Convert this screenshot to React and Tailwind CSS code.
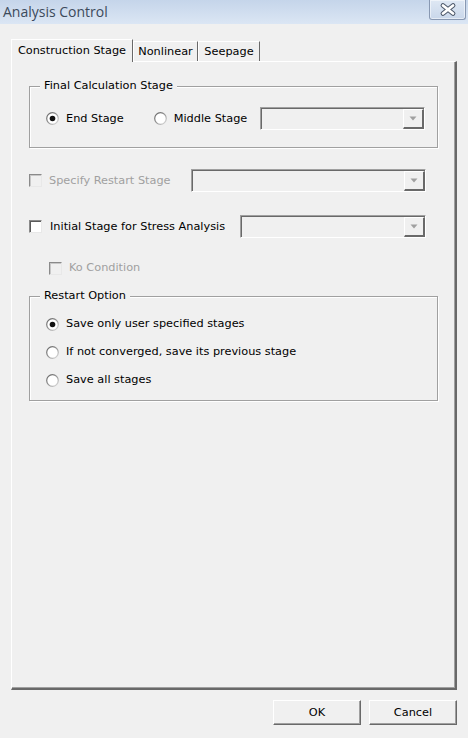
import React from "react";

const body = "font-['DejaVu_Sans',sans-serif] text-[11.3px] leading-[14px] text-black";

function Radio({ checked }) {
  return (
    <svg width="13" height="13" viewBox="0 0 13 13" className="shrink-0">
      <defs>
        <linearGradient id="rg" x1="0" y1="0" x2="1" y2="1">
          <stop offset="0" stopColor="#5f5f5f" />
          <stop offset="0.55" stopColor="#9a9a9a" />
          <stop offset="1" stopColor="#e2e2e2" />
        </linearGradient>
      </defs>
      <circle cx="6.5" cy="6.5" r="5.8" fill="#ffffff" stroke="url(#rg)" strokeWidth="1.2" />
      {checked && <circle cx="6.5" cy="6.5" r="2.8" fill="#111111" />}
    </svg>
  );
}

function Check({ disabled }) {
  return (
    <span
      className={
        "block w-[13px] h-[13px] shrink-0 border border-t-[#8a8a8a] border-l-[#8a8a8a] border-r-[#e8e8e8] border-b-[#e8e8e8] " +
        (disabled ? "bg-[#f0f0f0] shadow-[inset_1px_1px_0_#c8c8c8]" : "bg-white shadow-[inset_1px_1px_0_#5a5a5a]")
      }
    />
  );
}

function Combo({ w }) {
  return (
    <div
      className="flex justify-end h-[23px] border border-t-[#a0a0a0] border-l-[#a0a0a0] border-r-white border-b-white shadow-[inset_1px_1px_0_#696969] bg-[#f0f0f0] pt-[1px] pl-[1px] ml-auto"
      style={{ width: w }}
    >
      <div className="w-[21px] h-[20px] flex items-center justify-center bg-[#f0f0f0] border-t border-l border-t-white border-l-white border-r-2 border-b-2 border-r-[#696969] border-b-[#696969]">
        <svg width="8" height="5" viewBox="0 0 8 5">
          <path d="M0.5 0.5 L7.5 0.5 L4 4.5 Z" fill="#a0a0a0" />
        </svg>
      </div>
    </div>
  );
}

function Group({ title, className, children }) {
  return (
    <div
      className={
        "relative border border-[#a0a0a0] shadow-[1px_1px_0_#ffffff,inset_1px_1px_0_#ffffff] " + className
      }
    >
      <span className="absolute left-[10px] -top-[8px] px-[4px] bg-[#f0f0f0]">{title}</span>
      {children}
    </div>
  );
}

function Btn({ children }) {
  return (
    <div className="w-[88px] h-[25px] flex items-center justify-center bg-[#f0f0f0] border border-t-white border-l-white border-r-[#696969] border-b-[#696969] shadow-[inset_-1px_-1px_0_#a0a0a0]">
      {children}
    </div>
  );
}

export default function App() {
  return (
    <div className={"w-[468px] h-[738px] bg-[#f0f0f0] flex flex-col overflow-hidden " + body}>
      {/* title bar */}
      <div className="h-[24px] shrink-0 flex items-start justify-between bg-linear-to-b from-[#c5d5ea] to-[#dbe6f4]">
        <span className="pl-[3px] pt-[2px] font-['Open_Sans',sans-serif] text-[14px] leading-[20px] text-[#3c4a5b]">
          Analysis Control
        </span>
        <div className="mr-[2px] w-[37px] h-[20px] flex items-center justify-center rounded-b-[3px] border border-t-0 border-[#8898b2] bg-linear-to-b from-[#dfe8f4] to-[#c9d7ea] shadow-[inset_0_0_0_1px_rgba(255,255,255,0.5)]">
          <svg width="18" height="15" viewBox="0 0 18 15">
            <path d="M4 3.5 L14 11.5 M14 3.5 L4 11.5" stroke="#4b5668" strokeWidth="4.8" strokeLinecap="round" />
            <path d="M4 3.5 L14 11.5 M14 3.5 L4 11.5" stroke="#ffffff" strokeWidth="2.8" strokeLinecap="round" />
          </svg>
        </div>
      </div>

      {/* tabs + panel */}
      <div className="flex-1 flex flex-col px-[11px] pt-[15px]">
        <div className="h-[22px] flex items-end shrink-0 relative z-10">
          <div className="w-[122px] h-[23px] -mb-px flex items-center justify-center bg-[#f0f0f0] border-t border-l border-t-white border-l-white border-r border-r-[#696969] pb-[1px]">
            Construction Stage
          </div>
          <div className="w-[65px] h-[20px] flex items-center justify-center border-t border-l border-t-white border-l-white border-r border-r-[#696969]">
            Nonlinear
          </div>
          <div className="w-[62px] h-[20px] flex items-center justify-center border-t border-l border-t-white border-l-white border-r border-r-[#696969]">
            Seepage
          </div>
        </div>

        <div className="flex-1 flex flex-col border-t border-l border-t-white border-l-white border-r-2 border-b-2 border-r-[#696969] border-b-[#696969] shadow-[inset_-1px_-1px_0_#a0a0a0] pl-[17px] pr-[17px] pt-[24px]">
          <Group title="Final Calculation Stage" className="pt-[20px] pb-[17px] pl-[16px] pr-[12px]">
            <div className="flex items-center h-[23px]">
              <Radio checked />
              <span className="ml-[7px]">End Stage</span>
              <span className="ml-[30px]"><Radio /></span>
              <span className="ml-[7px]">Middle Stage</span>
              <Combo w={165} />
            </div>
          </Group>

          <div className="mt-[21px] flex items-center h-[23px] pr-[12px]">
            <Check disabled />
            <span className="ml-[7px] text-[#a0a0a0]">Specify Restart Stage</span>
            <Combo w={235} />
          </div>

          <div className="mt-[23px] flex items-center h-[23px] pr-[12px]">
            <Check />
            <span className="ml-[8px]">Initial Stage for Stress Analysis</span>
            <Combo w={186} />
          </div>

          <div className="mt-[23px] flex items-center h-[14px] pl-[20px]">
            <Check disabled />
            <span className="ml-[7px] text-[#a0a0a0]">Ko Condition</span>
          </div>

          <Group title="Restart Option" className="mt-[21px] pt-[20px] pb-[13px] pl-[16px] flex flex-col gap-[14px]">
            <div className="flex items-center h-[14px]">
              <Radio checked />
              <span className="ml-[7px]">Save only user specified stages</span>
            </div>
            <div className="flex items-center h-[14px]">
              <Radio />
              <span className="ml-[7px]">If not converged, save its previous stage</span>
            </div>
            <div className="flex items-center h-[14px]">
              <Radio />
              <span className="ml-[7px]">Save all stages</span>
            </div>
          </Group>
        </div>
      </div>

      {/* footer */}
      <div className="h-[48px] shrink-0 flex justify-end items-start gap-[8px] pt-[10px] pr-[11px]">
        <Btn>OK</Btn>
        <Btn>Cancel</Btn>
      </div>
    </div>
  );
}
